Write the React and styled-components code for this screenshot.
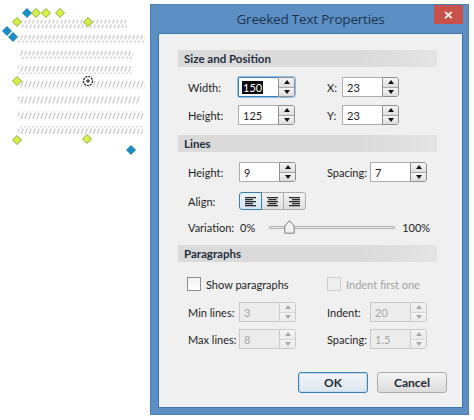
import React from "react";
import styled, { createGlobalStyle, css } from "styled-components";

const GlobalStyle = createGlobalStyle`
  html, body {
    margin: 0;
    padding: 0;
    background: #ffffff;
  }
  body {
    font-family: "Lato", "Open Sans", sans-serif;
    font-size: 11px;
    color: #1e1e1e;
  }
`;

const Page = styled.div`
  display: flex;
  align-items: flex-start;
  width: 474px;
  height: 420px;
  overflow: hidden;
`;

const Canvas = styled.svg`
  flex: 0 0 150px;
  display: block;
`;

const Window = styled.div`
  margin-top: 4px;
  width: 319px;
  height: 411px;
  box-sizing: border-box;
  display: flex;
  flex-direction: column;
  background: #5c8fc4;
  border: 1px solid #4d7fb4;
  padding: 0 5px 6px 7px;
`;

const TitleBar = styled.div`
  height: 28px;
  display: grid;
  grid-template-columns: 1fr auto 1fr;
  align-items: start;
`;

const Title = styled.div`
  grid-column: 2;
  padding-top: 5px;
  font-family: "Open Sans", sans-serif;
  font-size: 13.5px;
  color: #1c3553;
  letter-spacing: -0.2px;
`;

const CloseButton = styled.div`
  grid-column: 3;
  justify-self: end;
  width: 29px;
  height: 19px;
  background: #c9514c;
  color: #ffffff;
  display: flex;
  align-items: center;
  justify-content: center;
  font-size: 13px;
  font-weight: 700;
  font-family: "DejaVu Sans", sans-serif;
`;

const Client = styled.div`
  flex: 1;
  box-sizing: border-box;
  background: #f0f0f0;
  border: 1px solid #3f72a8;
  padding: 16px 15px 0 19px;
  display: flex;
  flex-direction: column;
`;

const SectionHeader = styled.div`
  height: 17px;
  margin-top: ${(p) => p.$top || 0}px;
  margin-right: 10px;
  padding-left: 6px;
  background: linear-gradient(to right, #dadada 70%, #e4e4e4);
  font-weight: 700;
  font-size: 11.5px;
  color: #1f2f40;
  display: flex;
  align-items: center;
`;

const Row = styled.div`
  display: flex;
  align-items: center;
  height: ${(p) => p.$h || 20}px;
  margin-top: ${(p) => p.$top || 0}px;
  padding-left: ${(p) => (p.$pad == null ? 10 : p.$pad)}px;
`;

const Label = styled.div`
  width: ${(p) => p.$w}px;
  flex: 0 0 ${(p) => p.$w}px;
  white-space: nowrap;
  color: #1e1e1e;
`;

const Gap = styled.div`
  flex: 0 0 ${(p) => p.$w}px;
`;

const SpinBox = styled.div`
  display: flex;
  width: 57px;
  height: 20px;
  box-sizing: border-box;
  border-radius: 3px;
  ${(p) =>
    p.$focused &&
    css`
      box-shadow: 0 0 0 1px #8dbdec;
    `}
`;

const SpinText = styled.div`
  flex: 1;
  box-sizing: border-box;
  border: 1px solid ${(p) => (p.$focused ? "#3c7fb1" : p.$disabled ? "#c9c9c9" : "#abadb3")};
  border-right: none;
  background: ${(p) => (p.$disabled ? "#ececec" : "#ffffff")};
  color: ${(p) => (p.$disabled ? "#a6a6a6" : "#1e1e1e")};
  padding-left: 4px;
  display: flex;
  align-items: center;
`;

const Selected = styled.span`
  background: #0a0a0a;
  color: #ffffff;
  padding: 0 1px;
  margin-left: -1px;
`;

const SpinButtons = styled.div`
  flex: 0 0 17px;
  display: flex;
  flex-direction: column;
  box-sizing: border-box;
  border: 1px solid ${(p) => (p.$disabled ? "#cacaca" : "#8e8f8f")};
  border-radius: 0 3px 3px 0;
  overflow: hidden;
`;

const SpinButton = styled.div`
  flex: 1;
  display: flex;
  align-items: center;
  justify-content: center;
  background: ${(p) =>
    p.$disabled
      ? "linear-gradient(#f4f4f4, #ebebeb)"
      : "linear-gradient(#f6f6f6, #dddddd)"};
  border-top: ${(p) => (p.$down ? `1px solid ${p.$disabled ? "#d6d6d6" : "#a8a8a8"}` : "none")};

  &::after {
    content: "";
    width: 0;
    height: 0;
    border-left: 3.5px solid transparent;
    border-right: 3.5px solid transparent;
    ${(p) =>
      p.$down
        ? css`border-top: 4px solid ${p.$disabled ? "#a9a9a9" : "#111111"};`
        : css`border-bottom: 4px solid ${p.$disabled ? "#a9a9a9" : "#111111"};`}
  }
`;

const AlignGroup = styled.div`
  display: flex;
`;

const AlignButton = styled.div`
  width: 23px;
  height: 18px;
  box-sizing: border-box;
  display: flex;
  align-items: center;
  justify-content: center;
  margin-left: ${(p) => (p.$first ? 0 : -1)}px;
  border: 1px solid ${(p) => (p.$active ? "#3c7fb1" : "#acacac")};
  border-radius: ${(p) => (p.$first ? "3px 0 0 3px" : p.$last ? "0 3px 3px 0" : "0")};
  background: ${(p) =>
    p.$active ? "linear-gradient(#eaf3fb, #d7e7f5)" : "linear-gradient(#f4f4f4, #dfdfdf)"};
  position: relative;
  z-index: ${(p) => (p.$active ? 1 : 0)};
`;

const SliderText = styled.div`
  white-space: nowrap;
`;

const Slider = styled.div`
  width: 126px;
  height: 18px;
  margin: 0 7px 0 14px;
  position: relative;
  display: flex;
  align-items: center;
`;

const Track = styled.div`
  width: 100%;
  height: 3px;
  box-sizing: border-box;
  border: 1px solid #b4b4b4;
  background: #e7e7e7;
  border-radius: 1px;
`;

const Thumb = styled.svg`
  position: absolute;
  left: ${(p) => p.$x}px;
  top: 2px;
`;

const CheckRow = styled.label`
  display: flex;
  align-items: center;
  width: ${(p) => p.$w}px;
  color: ${(p) => (p.$disabled ? "#a3a3a3" : "#1e1e1e")};
`;

const CheckBox = styled.span`
  width: 14px;
  height: 14px;
  box-sizing: border-box;
  border: 1px solid ${(p) => (p.$disabled ? "#cfcfcf" : "#8f8f8f")};
  background: ${(p) => (p.$disabled ? "#efefef" : "linear-gradient(#f2f2f2, #ffffff)")};
  margin-right: 5px;
`;

const ButtonBar = styled.div`
  display: flex;
  justify-content: flex-end;
  gap: 9px;
  margin-top: ${(p) => p.$top}px;
`;

const DialogButton = styled.div`
  width: 70px;
  height: 21px;
  box-sizing: border-box;
  display: flex;
  align-items: center;
  justify-content: center;
  font-weight: 700;
  font-size: 12px;
  color: #1f2a36;
  border-radius: 3px;
  border: 1px solid ${(p) => (p.$default ? "#3c7fb1" : "#acacac")};
  background: ${(p) =>
    p.$default ? "linear-gradient(#f2f6fa, #dde6ee)" : "linear-gradient(#f3f3f3, #dcdcdc)"};
  box-shadow: ${(p) => (p.$default ? "inset 0 0 0 1px #c6dcf0" : "none")};
`;

function Spin({ value, focused, disabled }) {
  return (
    <SpinBox $focused={focused}>
      <SpinText $focused={focused} $disabled={disabled}>
        {focused ? <Selected>{value}</Selected> : value}
      </SpinText>
      <SpinButtons $disabled={disabled}>
        <SpinButton $disabled={disabled} />
        <SpinButton $down $disabled={disabled} />
      </SpinButtons>
    </SpinBox>
  );
}

function AlignIcon({ kind }) {
  const widths = [11, 8, 11, 8, 11];
  return (
    <svg width="13" height="11" viewBox="0 0 13 11">
      {widths.map((w, i) => {
        const x = kind === "left" ? 1 : kind === "right" ? 12 - w : (13 - w) / 2;
        return <rect key={i} x={x} y={1 + i * 2} width={w} height="1.3" fill="#2a2a2a" />;
      })}
    </svg>
  );
}

const greekRows = [
  [22, 24, 127],
  [18, 39, 145],
  [20, 55, 133],
  [18, 70, 133],
  [20, 85, 145],
  [18, 100, 140],
  [18, 115, 143],
  [18, 130, 143],
];

const handles = [
  [27, 13, "b"],
  [36, 13, "g"],
  [46, 13, "g"],
  [60, 13, "g"],
  [17, 22, "g"],
  [88, 22, "g"],
  [7, 31, "b"],
  [13, 37, "b"],
  [17, 81, "g"],
  [17, 140, "g"],
  [87, 139, "g"],
  [131, 150, "b"],
];

function GreekedCanvas() {
  return (
    <Canvas width="150" height="170" viewBox="0 0 150 170">
      <defs>
        <pattern id="greek" width="4" height="8" patternUnits="userSpaceOnUse">
          <line x1="0.8" y1="7.5" x2="3.2" y2="0.5" stroke="#d0d0d0" strokeWidth="1.5" />
        </pattern>
      </defs>
      {greekRows.map(([x1, y, x2], i) => (
        <rect key={i} x={x1} y={y - 4} width={x2 - x1} height="8" fill="url(#greek)" />
      ))}
      <g transform="translate(88 81)">
        <circle r="4.5" fill="#ffffff" stroke="#111111" strokeWidth="1.2" strokeDasharray="2 1" />
        <line x1="-2" y1="0" x2="2" y2="0" stroke="#111111" strokeWidth="1" />
        <line x1="0" y1="-2" x2="0" y2="2" stroke="#111111" strokeWidth="1" />
      </g>
      {handles.map(([x, y, c], i) => (
        <polygon
          key={i}
          points={`${x},${y - 4.5} ${x + 4.5},${y} ${x},${y + 4.5} ${x - 4.5},${y}`}
          fill={c === "g" ? "#d7ee45" : "#1a8fc6"}
          stroke={c === "g" ? "#6f9a2a" : "#167199"}
          strokeWidth="0.8"
        />
      ))}
    </Canvas>
  );
}

export default function App() {
  return (
    <>
      <GlobalStyle />
      <Page>
        <GreekedCanvas />
        <Window>
          <TitleBar>
            <Title>Greeked Text Properties</Title>
            <CloseButton>×</CloseButton>
          </TitleBar>
          <Client>
            <SectionHeader>Size and Position</SectionHeader>
            <Row $top={10}>
              <Label $w={50}>Width:</Label>
              <Spin value="150" focused />
              <Gap $w={32} />
              <Label $w={15}>X:</Label>
              <Spin value="23" />
            </Row>
            <Row $top={8}>
              <Label $w={50}>Height:</Label>
              <Spin value="125" />
              <Gap $w={32} />
              <Label $w={15}>Y:</Label>
              <Spin value="23" />
            </Row>

            <SectionHeader $top={10}>Lines</SectionHeader>
            <Row $top={10}>
              <Label $w={51}>Height:</Label>
              <Spin value="9" />
              <Gap $w={31} />
              <Label $w={43}>Spacing:</Label>
              <Spin value="7" />
            </Row>
            <Row $top={10} $h={18}>
              <Label $w={51}>Align:</Label>
              <AlignGroup>
                <AlignButton $first $active>
                  <AlignIcon kind="left" />
                </AlignButton>
                <AlignButton>
                  <AlignIcon kind="center" />
                </AlignButton>
                <AlignButton $last>
                  <AlignIcon kind="right" />
                </AlignButton>
              </AlignGroup>
            </Row>
            <Row $top={8} $h={18}>
              <Label $w={52}>Variation:</Label>
              <SliderText>0%</SliderText>
              <Slider>
                <Track />
                <Thumb $x={15} width="11" height="14" viewBox="0 0 11 14">
                  <path d="M5.5 0.8 L10.2 6 L10.2 13.2 L0.8 13.2 L0.8 6 Z" fill="#f2f2f2" stroke="#7a7a7a" strokeWidth="1" />
                </Thumb>
              </Slider>
              <SliderText>100%</SliderText>
            </Row>

            <SectionHeader $top={9}>Paragraphs</SectionHeader>
            <Row $top={14} $h={16} $pad={9}>
              <CheckRow $w={140}>
                <CheckBox />
                Show paragraphs
              </CheckRow>
              <CheckRow $w={120} $disabled>
                <CheckBox $disabled />
                Indent first one
              </CheckRow>
            </Row>
            <Row $top={10}>
              <Label $w={51}>Min lines:</Label>
              <Spin value="3" disabled />
              <Gap $w={31} />
              <Label $w={43}>Indent:</Label>
              <Spin value="20" disabled />
            </Row>
            <Row $top={7}>
              <Label $w={51}>Max lines:</Label>
              <Spin value="8" disabled />
              <Gap $w={31} />
              <Label $w={43}>Spacing:</Label>
              <Spin value="1.5" disabled />
            </Row>

            <ButtonBar $top={23}>
              <DialogButton $default>OK</DialogButton>
              <DialogButton>Cancel</DialogButton>
            </ButtonBar>
          </Client>
        </Window>
      </Page>
    </>
  );
}
